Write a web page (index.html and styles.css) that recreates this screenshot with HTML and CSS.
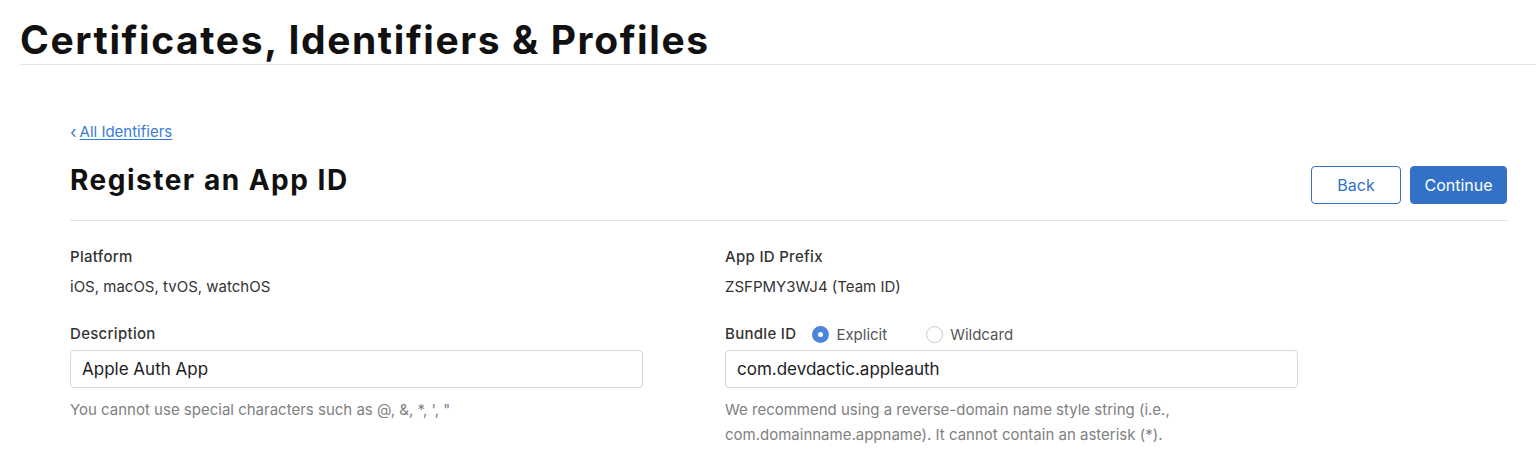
FILE: index.html
```html
<!DOCTYPE html>
<html lang="en">
<head>
<meta charset="utf-8">
<title>Register an App ID</title>
<link rel="stylesheet" href="styles.css">
</head>
<body>
<header class="top">
  <h1 class="top-title">Certificates, Identifiers &amp; Profiles</h1>
</header>
<main class="page">
  <a class="back-link" href="#"><span class="chev">‹</span> <span class="back-text">All Identifiers</span></a>
  <div class="page-head">
    <h2 class="page-title">Register an App ID</h2>
    <div class="actions">
      <button class="btn btn-secondary" type="button">Back</button>
      <button class="btn btn-primary" type="button">Continue</button>
    </div>
  </div>
  <section class="form">
    <div class="field">
      <div class="label">Platform</div>
      <div class="value">iOS, macOS, tvOS, watchOS</div>
    </div>
    <div class="field">
      <div class="label">App ID Prefix</div>
      <div class="value">ZSFPMY3WJ4 (Team ID)</div>
    </div>
    <div class="field">
      <div class="label-row"><span class="label">Description</span></div>
      <div class="input">Apple Auth App</div>
      <div class="help">You cannot use special characters such as @, &amp;, *, ', "</div>
    </div>
    <div class="field">
      <div class="label-row">
        <span class="label">Bundle ID</span>
        <span class="radio radio-on"></span><span class="radio-text">Explicit</span>
        <span class="radio radio-off"></span><span class="radio-text">Wildcard</span>
      </div>
      <div class="input">com.devdactic.appleauth</div>
      <div class="help">We recommend using a reverse-domain name style string (i.e., com.domainname.appname). It cannot contain an asterisk (*).</div>
    </div>
  </section>
</main>
</body>
</html>
```

FILE: styles.css
```css
* { box-sizing: border-box; }
html, body { margin: 0; padding: 0; background: #fff; }
body {
  font-family: Inter, "Noto Sans", "Liberation Sans", sans-serif;
  color: #1d1d1f;
  width: 1536px;
  height: 470px;
  overflow: hidden;
}
.top {
  margin-left: 20px;
  border-bottom: 1px solid #e3e3e3;
  padding-top: 16px;
  height: 65px;
}
.top-title {
  margin: 0;
  font-size: 39px;
  line-height: 48px;
  font-weight: 700;
  letter-spacing: 1.6px;
  color: #111;
}
.page {
  margin-left: 70px;
  margin-right: 29px;
  padding-top: 57px;
}
.back-link {
  display: inline-flex;
  align-items: center;
  font-size: 15px;
  line-height: 20px;
  color: #3b7bd6;
  text-decoration: none;
}
.chev { font-size: 17px; margin-right: 3px; line-height: 20px; }
.back-text { text-decoration: underline; text-underline-offset: 2px; }
.page-head {
  display: flex;
  justify-content: space-between;
  align-items: flex-start;
  margin-top: 18px;
  padding-bottom: 16px;
  border-bottom: 1px solid #e3e3e3;
}
.page-title {
  margin: 0;
  font-size: 28px;
  line-height: 40px;
  font-weight: 700;
  color: #111;
  letter-spacing: 1.5px;
}
.actions { display: flex; gap: 9px; margin-top: 6px; }
.btn {
  font-family: inherit;
  font-size: 16px;
  height: 38px;
  border-radius: 4px;
  padding: 0;
  cursor: pointer;
}
.btn-secondary {
  width: 90px;
  background: #fff;
  color: #3271c6;
  border: 1px solid #3271c6;
}
.btn-primary {
  width: 97px;
  background: #3271c6;
  color: #fff;
  border: 1px solid #3271c6;
}
.form {
  display: grid;
  grid-template-columns: 655px 655px;
  row-gap: 27px;
  padding-top: 26px;
}
.label {
  font-size: 15px;
  line-height: 20px;
  color: #333;
  font-weight: 500;
  letter-spacing: 0.3px;
}
.value {
  margin-top: 10px;
  font-size: 15px;
  line-height: 20px;
  color: #333;
}
.label-row {
  display: flex;
  align-items: center;
  height: 20px;
}
.radio {
  width: 17px;
  height: 17px;
  border-radius: 50%;
  display: inline-block;
  flex: none;
}
.radio-on {
  margin-left: 16px;
  background: #4a87dc;
  position: relative;
}
.radio-on::after {
  content: "";
  position: absolute;
  left: 6px;
  top: 6px;
  width: 5px;
  height: 5px;
  border-radius: 50%;
  background: #fff;
}
.radio-off {
  margin-left: 39px;
  border: 1px solid #c8c8c8;
  background: #fff;
}
.radio-text {
  margin-left: 7px;
  font-size: 15px;
  color: #555;
}
.input {
  margin-top: 6px;
  width: 573px;
  height: 38px;
  border: 1px solid #d6d6d6;
  border-radius: 4px;
  padding: 0 11px;
  font-size: 17px;
  line-height: 36px;
  color: #1d1d1f;
}
.help {
  margin-top: 9px;
  width: 500px;
  font-size: 15px;
  line-height: 25px;
  color: #808080;
}
```
